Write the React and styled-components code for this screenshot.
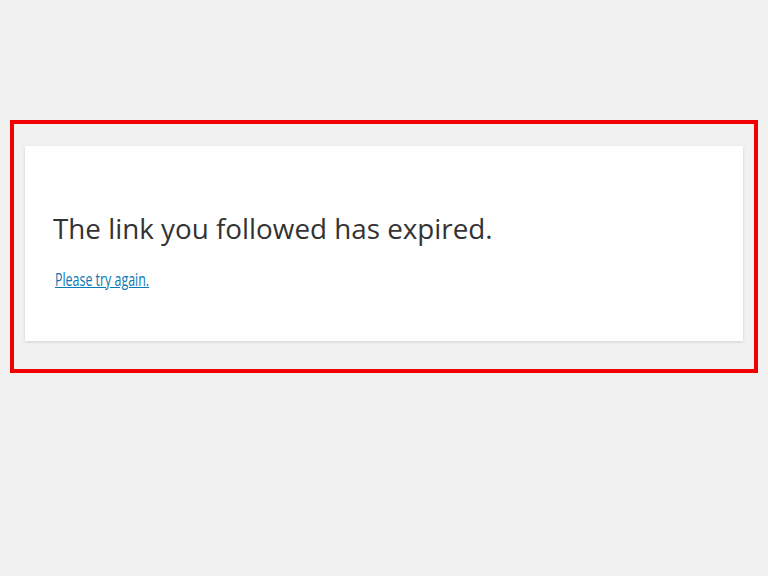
import React from 'react'
import styled, { createGlobalStyle } from 'styled-components'

const GlobalStyle = createGlobalStyle`
  html, body {
    margin: 0;
    padding: 0;
    background: #f1f1f1;
    font-family: "Open Sans", "Noto Sans", sans-serif;
  }
`;

const Page = styled.div`
  width: 768px;
  height: 576px;
  padding: 120px 0 0 10px;
  box-sizing: border-box;
`;

const Frame = styled.div`
  width: 748px;
  height: 253px;
  box-sizing: border-box;
  border: 4px solid #f20000;
  padding: 22px 11px 0 11px;
`;

const Card = styled.div`
  height: 195px;
  background: #fff;
  box-shadow: 0 1px 3px rgba(0, 0, 0, 0.13);
  padding: 64px 28px 0 28px;
  box-sizing: border-box;
`;

const Title = styled.h1`
  margin: 0;
  font-size: 27.8px;
  font-weight: 400;
  line-height: 36px;
  color: #333;
`;

const RetryLink = styled.a`
  display: inline-block;
  margin-top: 22px;
  margin-left: 2px;
  font-size: 18px;
  line-height: 22px;
  color: #0a78b4;
  text-decoration: underline;
  transform-origin: left center;
  transform: scaleX(0.69);
`;

const App = () => {
  return (
    <>
      <GlobalStyle />
      <Page>
        <Frame>
          <Card>
            <Title>The link you followed has expired.</Title>
            <RetryLink href="#">Please try again.</RetryLink>
          </Card>
        </Frame>
      </Page>
    </>
  )
};

export default App
